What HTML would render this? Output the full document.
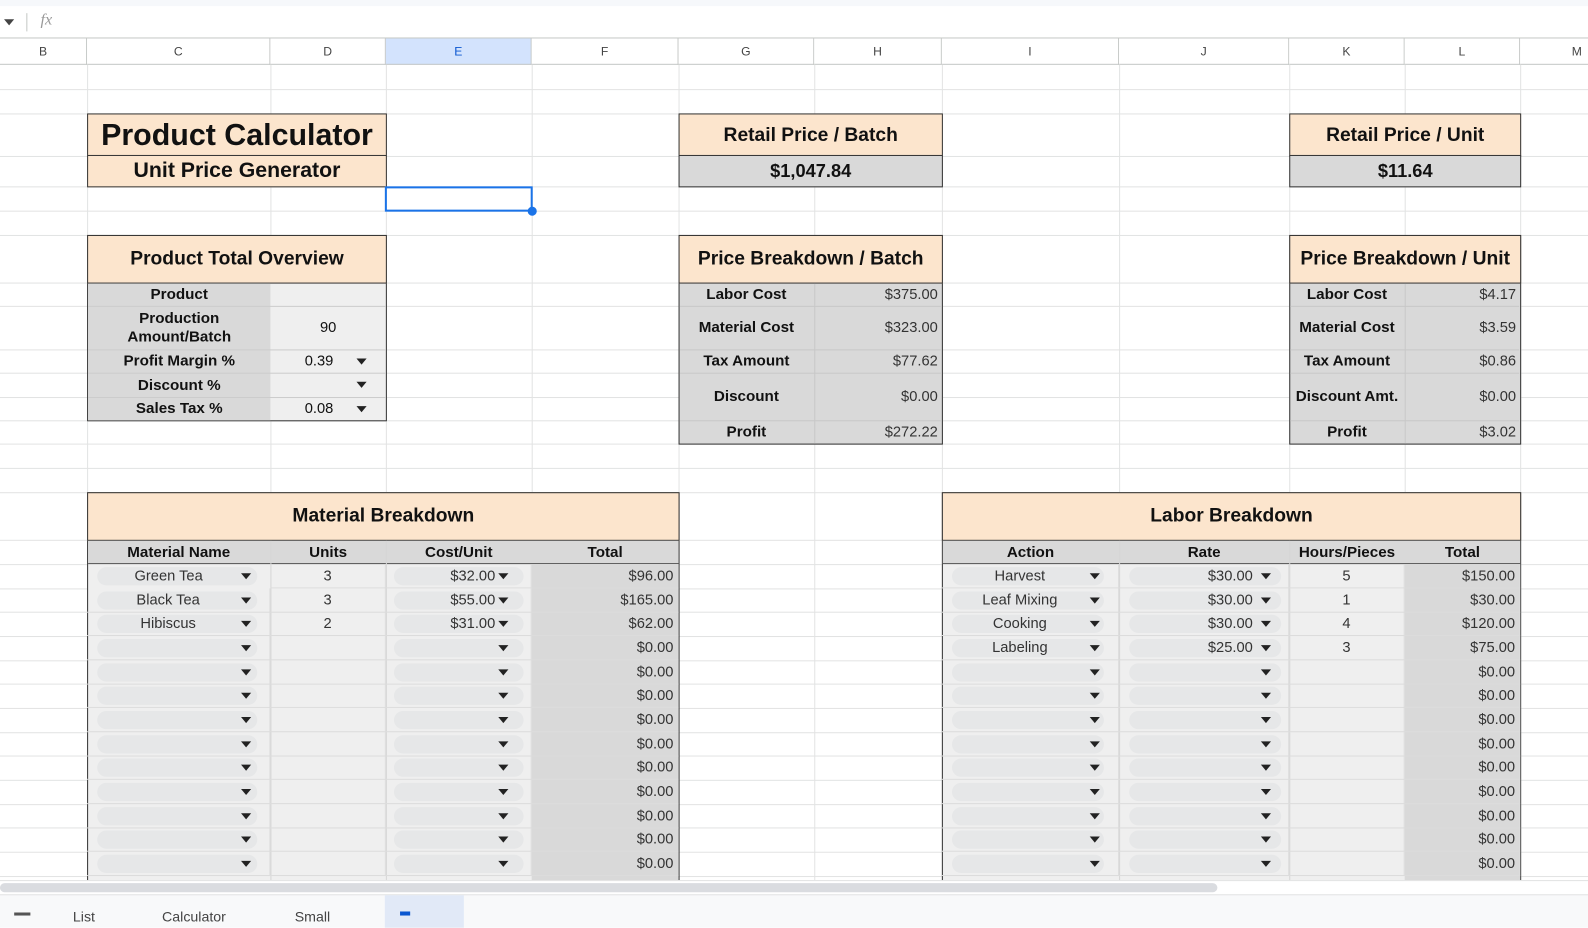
<!DOCTYPE html>
<html><head><meta charset="utf-8">
<style>
*{box-sizing:border-box;margin:0;padding:0}
body{width:1588px;height:916px;overflow:hidden;background:#fff;font-family:"Liberation Sans",Arial,sans-serif;position:relative;color:#111}
#w{position:absolute;left:0;top:0;width:1568px;height:905px;transform:scale(1.01276);transform-origin:0 0}
.a{position:absolute}
.hl{position:absolute;left:0;width:1588px;height:1px;background:#e2e3e3}
.vl{position:absolute;top:64px;height:806px;width:1px;background:#e2e3e3}
.ch{position:absolute;top:38px;height:26px;font-size:12px;color:#444;display:flex;align-items:center;justify-content:center;border-right:1px solid #c4c7c5;border-bottom:1px solid #c4c7c5;background:#fff}
.c{position:absolute;display:flex;align-items:center;justify-content:center;text-align:center}
.pe{background:#fce5cd;font-weight:bold;border:1.5px solid #333}
.b{font-weight:bold}
.g{background:#d9d9d9}
.lg{background:#efefef}
.tr{position:absolute;width:0;height:0;border-left:5px solid transparent;border-right:5px solid transparent;border-top:6px solid #222}
.row{position:absolute;height:24px;font-size:14.5px;color:#333}
.row>div{position:absolute;top:0;height:24px;display:flex;align-items:center;justify-content:center;border-right:1px solid #dcdcdc;border-bottom:1px solid #dcdcdc}
.pill{position:absolute;top:3px;height:18px;border-radius:9px;background:#e6e7e8}
.rt{justify-content:flex-end!important;padding-right:4px}
</style></head><body><div id="w">
<div class="a" style="left:0;top:0;width:1588px;height:6px;background:#f6f8fb"></div>
<div class="tr" style="left:4px;top:19px;border-top-color:#444"></div>
<div class="a" style="left:26px;top:13px;width:1px;height:18px;background:#c4c7c5"></div>
<div class="a" style="left:40px;top:11px;font-family:'Liberation Serif',serif;font-style:italic;color:#999;font-size:16px">fx</div>
<div class="a" style="left:0;top:37px;width:1588px;height:1px;background:#c4c7c5"></div>
<div class="ch" style="left:0;width:86px">B</div>
<div class="ch" style="left:86px;width:181px">C</div>
<div class="ch" style="left:267px;width:114px">D</div>
<div class="ch" style="left:381px;width:144px;background:#d3e3fd;color:#0b57d0">E</div>
<div class="ch" style="left:525px;width:145px">F</div>
<div class="ch" style="left:670px;width:134px">G</div>
<div class="ch" style="left:804px;width:126px">H</div>
<div class="ch" style="left:930px;width:175px">I</div>
<div class="ch" style="left:1105px;width:168px">J</div>
<div class="ch" style="left:1273px;width:114px">K</div>
<div class="ch" style="left:1387px;width:114px">L</div>
<div class="ch" style="left:1501px;width:110px;justify-content:flex-start;padding-left:51px">M</div>
<div class="vl" style="left:86px"></div><div class="vl" style="left:267px"></div><div class="vl" style="left:381px"></div><div class="vl" style="left:525px"></div><div class="vl" style="left:670px"></div><div class="vl" style="left:804px"></div><div class="vl" style="left:930px"></div><div class="vl" style="left:1105px"></div><div class="vl" style="left:1273px"></div><div class="vl" style="left:1387px"></div><div class="vl" style="left:1501px"></div>
<div class="hl" style="top:88px"></div><div class="hl" style="top:112px"></div><div class="hl" style="top:154px"></div><div class="hl" style="top:184px"></div><div class="hl" style="top:208px"></div><div class="hl" style="top:232px"></div><div class="hl" style="top:279px"></div><div class="hl" style="top:302px"></div><div class="hl" style="top:345px"></div><div class="hl" style="top:368px"></div><div class="hl" style="top:392px"></div><div class="hl" style="top:415px"></div><div class="hl" style="top:438px"></div><div class="hl" style="top:462px"></div><div class="hl" style="top:486px"></div><div class="hl" style="top:533px"></div><div class="hl" style="top:557px"></div><div class="hl" style="top:581px"></div><div class="hl" style="top:604px"></div><div class="hl" style="top:628px"></div><div class="hl" style="top:652px"></div><div class="hl" style="top:675px"></div><div class="hl" style="top:699px"></div><div class="hl" style="top:723px"></div><div class="hl" style="top:746px"></div><div class="hl" style="top:770px"></div><div class="hl" style="top:794px"></div><div class="hl" style="top:817px"></div><div class="hl" style="top:841px"></div><div class="hl" style="top:865px"></div>

<div class="c pe" style="left:86px;top:112px;width:296px;height:43px;font-size:30px">Product Calculator</div>
<div class="c pe" style="left:86px;top:153px;width:296px;height:32px;font-size:21px">Unit Price Generator</div>
<div class="a" style="left:380px;top:184px;width:146px;height:25px;border:2px solid #1a73e8"></div>
<div class="a" style="left:521px;top:204px;width:9px;height:9px;border-radius:50%;background:#1a73e8"></div>

<div class="c pe" style="left:670px;top:112px;width:261px;height:43px;font-size:19px">Retail Price / Batch</div>
<div class="c g b" style="left:670px;top:153px;width:261px;height:32px;font-size:18px;border:1.5px solid #333">$1,047.84</div>
<div class="c pe" style="left:1273px;top:112px;width:229px;height:43px;font-size:19px">Retail Price / Unit</div>
<div class="c g b" style="left:1273px;top:153px;width:229px;height:32px;font-size:18px;border:1.5px solid #333">$11.64</div>

<div class="a" style="left:86px;top:232px;width:296px;height:184px;border:1.5px solid #333;background:#efefef"></div>
<div class="c pe" style="left:86px;top:232px;width:296px;height:48px;font-size:19px">Product Total Overview</div>
<div class="a g" style="left:87px;top:280px;width:180px;height:135px"></div>
<div class="c b" style="left:87px;top:279px;width:180px;height:23px;font-size:15px">Product</div>
<div class="c b" style="left:87px;top:302px;width:180px;height:43px;font-size:15px;line-height:18px">Production<br>Amount/Batch</div>
<div class="c b" style="left:87px;top:345px;width:180px;height:23px;font-size:15px">Profit Margin %</div>
<div class="c b" style="left:87px;top:368px;width:180px;height:24px;font-size:15px">Discount %</div>
<div class="c b" style="left:87px;top:392px;width:180px;height:23px;font-size:15px">Sales Tax %</div>
<div class="c" style="left:267px;top:302px;width:114px;height:43px;font-size:14.5px">90</div>
<div class="c" style="left:267px;top:345px;width:96px;height:23px;font-size:14.5px">0.39</div>
<div class="c" style="left:267px;top:392px;width:96px;height:23px;font-size:14.5px">0.08</div>
<div class="tr" style="left:352px;top:354px"></div><div class="tr" style="left:352px;top:377px"></div><div class="tr" style="left:352px;top:401px"></div>
<div class="a" style="left:87px;top:302px;width:294px;height:1px;background:#ccc"></div>
<div class="a" style="left:87px;top:345px;width:294px;height:1px;background:#ccc"></div>
<div class="a" style="left:87px;top:368px;width:294px;height:1px;background:#ccc"></div>
<div class="a" style="left:87px;top:392px;width:294px;height:1px;background:#ccc"></div>

<div class="a g" style="left:670px;top:232px;width:261px;height:207px;border:1.5px solid #333"></div>
<div class="c pe" style="left:670px;top:232px;width:261px;height:48px;font-size:19px">Price Breakdown / Batch</div>
<div class="a" style="left:804px;top:280px;width:1px;height:158px;background:#c8c8c8"></div>
<div class="c b" style="left:670px;top:279px;width:134px;height:23px;font-size:15px">Labor Cost</div>
<div class="c b" style="left:670px;top:302px;width:134px;height:43px;font-size:15px">Material Cost</div>
<div class="c b" style="left:670px;top:345px;width:134px;height:23px;font-size:15px">Tax Amount</div>
<div class="c b" style="left:670px;top:368px;width:134px;height:47px;font-size:15px">Discount</div>
<div class="c b" style="left:670px;top:415px;width:134px;height:23px;font-size:15px">Profit</div>
<div class="c rt" style="left:804px;top:279px;width:126px;height:23px;font-size:14.5px;color:#333">$375.00</div>
<div class="c rt" style="left:804px;top:302px;width:126px;height:43px;font-size:14.5px;color:#333">$323.00</div>
<div class="c rt" style="left:804px;top:345px;width:126px;height:23px;font-size:14.5px;color:#333">$77.62</div>
<div class="c rt" style="left:804px;top:368px;width:126px;height:47px;font-size:14.5px;color:#333">$0.00</div>
<div class="c rt" style="left:804px;top:415px;width:126px;height:23px;font-size:14.5px;color:#333">$272.22</div>
<div class="a" style="left:671px;top:302px;width:258px;height:1px;background:#c8c8c8"></div><div class="a" style="left:671px;top:345px;width:258px;height:1px;background:#c8c8c8"></div><div class="a" style="left:671px;top:368px;width:258px;height:1px;background:#c8c8c8"></div><div class="a" style="left:671px;top:415px;width:258px;height:1px;background:#c8c8c8"></div>

<div class="a g" style="left:1273px;top:232px;width:229px;height:207px;border:1.5px solid #333"></div>
<div class="c pe" style="left:1273px;top:232px;width:229px;height:48px;font-size:19px">Price Breakdown / Unit</div>
<div class="a" style="left:1387px;top:280px;width:1px;height:158px;background:#c8c8c8"></div>
<div class="c b" style="left:1273px;top:279px;width:114px;height:23px;font-size:15px">Labor Cost</div>
<div class="c b" style="left:1273px;top:302px;width:114px;height:43px;font-size:15px">Material Cost</div>
<div class="c b" style="left:1273px;top:345px;width:114px;height:23px;font-size:15px">Tax Amount</div>
<div class="c b" style="left:1273px;top:368px;width:114px;height:47px;font-size:15px">Discount Amt.</div>
<div class="c b" style="left:1273px;top:415px;width:114px;height:23px;font-size:15px">Profit</div>
<div class="c rt" style="left:1387px;top:279px;width:114px;height:23px;font-size:14.5px;color:#333">$4.17</div>
<div class="c rt" style="left:1387px;top:302px;width:114px;height:43px;font-size:14.5px;color:#333">$3.59</div>
<div class="c rt" style="left:1387px;top:345px;width:114px;height:23px;font-size:14.5px;color:#333">$0.86</div>
<div class="c rt" style="left:1387px;top:368px;width:114px;height:47px;font-size:14.5px;color:#333">$0.00</div>
<div class="c rt" style="left:1387px;top:415px;width:114px;height:23px;font-size:14.5px;color:#333">$3.02</div>
<div class="a" style="left:1274px;top:302px;width:226px;height:1px;background:#c8c8c8"></div><div class="a" style="left:1274px;top:345px;width:226px;height:1px;background:#c8c8c8"></div><div class="a" style="left:1274px;top:368px;width:226px;height:1px;background:#c8c8c8"></div><div class="a" style="left:1274px;top:415px;width:226px;height:1px;background:#c8c8c8"></div>

<div class="a" style="left:86px;top:486px;width:585px;height:390px;border:1.5px solid #333;background:#efefef"></div>
<div class="c pe" style="left:86px;top:486px;width:585px;height:48px;font-size:19px">Material Breakdown</div>
<div class="a g" style="left:87px;top:534px;width:583px;height:23px;border-bottom:1.5px solid #555"></div>
<div class="c b" style="left:86px;top:533px;width:181px;height:24px;font-size:15px">Material Name</div>
<div class="c b" style="left:267px;top:533px;width:114px;height:24px;font-size:15px">Units</div>
<div class="c b" style="left:381px;top:533px;width:144px;height:24px;font-size:15px">Cost/Unit</div>
<div class="c b" style="left:525px;top:533px;width:145px;height:24px;font-size:15px">Total</div>
<div class="a" style="left:267px;top:534px;width:1px;height:336px;background:#d6d6d6"></div>
<div class="a" style="left:381px;top:534px;width:1px;height:336px;background:#d6d6d6"></div>
<div class="a g" style="left:525px;top:557px;width:145px;height:313px"></div>

<div class="a" style="left:930px;top:486px;width:572px;height:390px;border:1.5px solid #333;background:#efefef"></div>
<div class="c pe" style="left:930px;top:486px;width:572px;height:48px;font-size:19px">Labor Breakdown</div>
<div class="a g" style="left:931px;top:534px;width:570px;height:23px;border-bottom:1.5px solid #555"></div>
<div class="c b" style="left:930px;top:533px;width:175px;height:24px;font-size:15px">Action</div>
<div class="c b" style="left:1105px;top:533px;width:168px;height:24px;font-size:15px">Rate</div>
<div class="c b" style="left:1273px;top:533px;width:114px;height:24px;font-size:15px">Hours/Pieces</div>
<div class="c b" style="left:1387px;top:533px;width:114px;height:24px;font-size:15px">Total</div>
<div class="a" style="left:1105px;top:534px;width:1px;height:336px;background:#d6d6d6"></div>
<div class="a" style="left:1273px;top:534px;width:1px;height:336px;background:#d6d6d6"></div>
<div class="a g" style="left:1387px;top:557px;width:114px;height:313px"></div>

<div class="row" style="left:86px;top:557px;width:585px">
<div style="left:0;width:181px;border:0"><span class="pill" style="left:10px;width:158px"></span><span style="position:relative;margin-right:20px">Green Tea</span><i class="tr" style="left:152px;top:9px"></i></div>
<div style="left:181px;width:114px">3</div>
<div style="left:295px;width:144px;justify-content:flex-end;padding-right:35px"><span class="pill" style="left:8px;width:128px"></span><span style="position:relative">$32.00</span><i class="tr" style="left:111px;top:9px"></i></div>
<div class="rt" style="left:439px;width:145px">$96.00</div></div>
<div class="row" style="left:86px;top:581px;width:585px">
<div style="left:0;width:181px"><span class="pill" style="left:10px;width:158px"></span><span style="position:relative;margin-right:20px">Black Tea</span><i class="tr" style="left:152px;top:9px"></i></div>
<div style="left:181px;width:114px">3</div>
<div style="left:295px;width:144px;justify-content:flex-end;padding-right:35px"><span class="pill" style="left:8px;width:128px"></span><span style="position:relative">$55.00</span><i class="tr" style="left:111px;top:9px"></i></div>
<div class="rt" style="left:439px;width:145px">$165.00</div></div>
<div class="row" style="left:86px;top:604px;width:585px">
<div style="left:0;width:181px"><span class="pill" style="left:10px;width:158px"></span><span style="position:relative;margin-right:20px">Hibiscus</span><i class="tr" style="left:152px;top:9px"></i></div>
<div style="left:181px;width:114px">2</div>
<div style="left:295px;width:144px;justify-content:flex-end;padding-right:35px"><span class="pill" style="left:8px;width:128px"></span><span style="position:relative">$31.00</span><i class="tr" style="left:111px;top:9px"></i></div>
<div class="rt" style="left:439px;width:145px">$62.00</div></div>

<div class="row" style="left:86px;top:628px;width:585px"><div style="left:0;width:181px"><span class="pill" style="left:10px;width:158px"></span><i class="tr" style="left:152px;top:9px"></i></div><div style="left:181px;width:114px"></div><div style="left:295px;width:144px"><span class="pill" style="left:8px;width:128px"></span><i class="tr" style="left:111px;top:9px"></i></div><div class="rt" style="left:439px;width:145px">$0.00</div></div>
<div class="row" style="left:86px;top:652px;width:585px"><div style="left:0;width:181px"><span class="pill" style="left:10px;width:158px"></span><i class="tr" style="left:152px;top:9px"></i></div><div style="left:181px;width:114px"></div><div style="left:295px;width:144px"><span class="pill" style="left:8px;width:128px"></span><i class="tr" style="left:111px;top:9px"></i></div><div class="rt" style="left:439px;width:145px">$0.00</div></div>
<div class="row" style="left:86px;top:675px;width:585px"><div style="left:0;width:181px"><span class="pill" style="left:10px;width:158px"></span><i class="tr" style="left:152px;top:9px"></i></div><div style="left:181px;width:114px"></div><div style="left:295px;width:144px"><span class="pill" style="left:8px;width:128px"></span><i class="tr" style="left:111px;top:9px"></i></div><div class="rt" style="left:439px;width:145px">$0.00</div></div>
<div class="row" style="left:86px;top:699px;width:585px"><div style="left:0;width:181px"><span class="pill" style="left:10px;width:158px"></span><i class="tr" style="left:152px;top:9px"></i></div><div style="left:181px;width:114px"></div><div style="left:295px;width:144px"><span class="pill" style="left:8px;width:128px"></span><i class="tr" style="left:111px;top:9px"></i></div><div class="rt" style="left:439px;width:145px">$0.00</div></div>
<div class="row" style="left:86px;top:723px;width:585px"><div style="left:0;width:181px"><span class="pill" style="left:10px;width:158px"></span><i class="tr" style="left:152px;top:9px"></i></div><div style="left:181px;width:114px"></div><div style="left:295px;width:144px"><span class="pill" style="left:8px;width:128px"></span><i class="tr" style="left:111px;top:9px"></i></div><div class="rt" style="left:439px;width:145px">$0.00</div></div>
<div class="row" style="left:86px;top:746px;width:585px"><div style="left:0;width:181px"><span class="pill" style="left:10px;width:158px"></span><i class="tr" style="left:152px;top:9px"></i></div><div style="left:181px;width:114px"></div><div style="left:295px;width:144px"><span class="pill" style="left:8px;width:128px"></span><i class="tr" style="left:111px;top:9px"></i></div><div class="rt" style="left:439px;width:145px">$0.00</div></div>
<div class="row" style="left:86px;top:770px;width:585px"><div style="left:0;width:181px"><span class="pill" style="left:10px;width:158px"></span><i class="tr" style="left:152px;top:9px"></i></div><div style="left:181px;width:114px"></div><div style="left:295px;width:144px"><span class="pill" style="left:8px;width:128px"></span><i class="tr" style="left:111px;top:9px"></i></div><div class="rt" style="left:439px;width:145px">$0.00</div></div>
<div class="row" style="left:86px;top:794px;width:585px"><div style="left:0;width:181px"><span class="pill" style="left:10px;width:158px"></span><i class="tr" style="left:152px;top:9px"></i></div><div style="left:181px;width:114px"></div><div style="left:295px;width:144px"><span class="pill" style="left:8px;width:128px"></span><i class="tr" style="left:111px;top:9px"></i></div><div class="rt" style="left:439px;width:145px">$0.00</div></div>
<div class="row" style="left:86px;top:817px;width:585px"><div style="left:0;width:181px"><span class="pill" style="left:10px;width:158px"></span><i class="tr" style="left:152px;top:9px"></i></div><div style="left:181px;width:114px"></div><div style="left:295px;width:144px"><span class="pill" style="left:8px;width:128px"></span><i class="tr" style="left:111px;top:9px"></i></div><div class="rt" style="left:439px;width:145px">$0.00</div></div>
<div class="row" style="left:86px;top:841px;width:585px"><div style="left:0;width:181px"><span class="pill" style="left:10px;width:158px"></span><i class="tr" style="left:152px;top:9px"></i></div><div style="left:181px;width:114px"></div><div style="left:295px;width:144px"><span class="pill" style="left:8px;width:128px"></span><i class="tr" style="left:111px;top:9px"></i></div><div class="rt" style="left:439px;width:145px">$0.00</div></div>

<div class="row" style="left:930px;top:557px;width:572px"><div style="left:0;width:175px"><span class="pill" style="left:10px;width:150px"></span><span style="position:relative;margin-right:20px">Harvest</span><i class="tr" style="left:146px;top:9px"></i></div><div style="left:175px;width:168px;justify-content:flex-end;padding-right:35px"><span class="pill" style="left:10px;width:150px"></span><span style="position:relative">$30.00</span><i class="tr" style="left:140px;top:9px"></i></div><div style="left:343px;width:114px">5</div><div class="rt" style="left:457px;width:114px">$150.00</div></div>
<div class="row" style="left:930px;top:581px;width:572px"><div style="left:0;width:175px"><span class="pill" style="left:10px;width:150px"></span><span style="position:relative;margin-right:20px">Leaf Mixing</span><i class="tr" style="left:146px;top:9px"></i></div><div style="left:175px;width:168px;justify-content:flex-end;padding-right:35px"><span class="pill" style="left:10px;width:150px"></span><span style="position:relative">$30.00</span><i class="tr" style="left:140px;top:9px"></i></div><div style="left:343px;width:114px">1</div><div class="rt" style="left:457px;width:114px">$30.00</div></div>
<div class="row" style="left:930px;top:604px;width:572px"><div style="left:0;width:175px"><span class="pill" style="left:10px;width:150px"></span><span style="position:relative;margin-right:20px">Cooking</span><i class="tr" style="left:146px;top:9px"></i></div><div style="left:175px;width:168px;justify-content:flex-end;padding-right:35px"><span class="pill" style="left:10px;width:150px"></span><span style="position:relative">$30.00</span><i class="tr" style="left:140px;top:9px"></i></div><div style="left:343px;width:114px">4</div><div class="rt" style="left:457px;width:114px">$120.00</div></div>
<div class="row" style="left:930px;top:628px;width:572px"><div style="left:0;width:175px"><span class="pill" style="left:10px;width:150px"></span><span style="position:relative;margin-right:20px">Labeling</span><i class="tr" style="left:146px;top:9px"></i></div><div style="left:175px;width:168px;justify-content:flex-end;padding-right:35px"><span class="pill" style="left:10px;width:150px"></span><span style="position:relative">$25.00</span><i class="tr" style="left:140px;top:9px"></i></div><div style="left:343px;width:114px">3</div><div class="rt" style="left:457px;width:114px">$75.00</div></div>
<div class="row" style="left:930px;top:652px;width:572px"><div style="left:0;width:175px"><span class="pill" style="left:10px;width:150px"></span><i class="tr" style="left:146px;top:9px"></i></div><div style="left:175px;width:168px"><span class="pill" style="left:10px;width:150px"></span><i class="tr" style="left:140px;top:9px"></i></div><div style="left:343px;width:114px"></div><div class="rt" style="left:457px;width:114px">$0.00</div></div>
<div class="row" style="left:930px;top:675px;width:572px"><div style="left:0;width:175px"><span class="pill" style="left:10px;width:150px"></span><i class="tr" style="left:146px;top:9px"></i></div><div style="left:175px;width:168px"><span class="pill" style="left:10px;width:150px"></span><i class="tr" style="left:140px;top:9px"></i></div><div style="left:343px;width:114px"></div><div class="rt" style="left:457px;width:114px">$0.00</div></div>
<div class="row" style="left:930px;top:699px;width:572px"><div style="left:0;width:175px"><span class="pill" style="left:10px;width:150px"></span><i class="tr" style="left:146px;top:9px"></i></div><div style="left:175px;width:168px"><span class="pill" style="left:10px;width:150px"></span><i class="tr" style="left:140px;top:9px"></i></div><div style="left:343px;width:114px"></div><div class="rt" style="left:457px;width:114px">$0.00</div></div>
<div class="row" style="left:930px;top:723px;width:572px"><div style="left:0;width:175px"><span class="pill" style="left:10px;width:150px"></span><i class="tr" style="left:146px;top:9px"></i></div><div style="left:175px;width:168px"><span class="pill" style="left:10px;width:150px"></span><i class="tr" style="left:140px;top:9px"></i></div><div style="left:343px;width:114px"></div><div class="rt" style="left:457px;width:114px">$0.00</div></div>
<div class="row" style="left:930px;top:746px;width:572px"><div style="left:0;width:175px"><span class="pill" style="left:10px;width:150px"></span><i class="tr" style="left:146px;top:9px"></i></div><div style="left:175px;width:168px"><span class="pill" style="left:10px;width:150px"></span><i class="tr" style="left:140px;top:9px"></i></div><div style="left:343px;width:114px"></div><div class="rt" style="left:457px;width:114px">$0.00</div></div>
<div class="row" style="left:930px;top:770px;width:572px"><div style="left:0;width:175px"><span class="pill" style="left:10px;width:150px"></span><i class="tr" style="left:146px;top:9px"></i></div><div style="left:175px;width:168px"><span class="pill" style="left:10px;width:150px"></span><i class="tr" style="left:140px;top:9px"></i></div><div style="left:343px;width:114px"></div><div class="rt" style="left:457px;width:114px">$0.00</div></div>
<div class="row" style="left:930px;top:794px;width:572px"><div style="left:0;width:175px"><span class="pill" style="left:10px;width:150px"></span><i class="tr" style="left:146px;top:9px"></i></div><div style="left:175px;width:168px"><span class="pill" style="left:10px;width:150px"></span><i class="tr" style="left:140px;top:9px"></i></div><div style="left:343px;width:114px"></div><div class="rt" style="left:457px;width:114px">$0.00</div></div>
<div class="row" style="left:930px;top:817px;width:572px"><div style="left:0;width:175px"><span class="pill" style="left:10px;width:150px"></span><i class="tr" style="left:146px;top:9px"></i></div><div style="left:175px;width:168px"><span class="pill" style="left:10px;width:150px"></span><i class="tr" style="left:140px;top:9px"></i></div><div style="left:343px;width:114px"></div><div class="rt" style="left:457px;width:114px">$0.00</div></div>
<div class="row" style="left:930px;top:841px;width:572px"><div style="left:0;width:175px"><span class="pill" style="left:10px;width:150px"></span><i class="tr" style="left:146px;top:9px"></i></div><div style="left:175px;width:168px"><span class="pill" style="left:10px;width:150px"></span><i class="tr" style="left:140px;top:9px"></i></div><div style="left:343px;width:114px"></div><div class="rt" style="left:457px;width:114px">$0.00</div></div>

<div class="a" style="left:0;top:869px;width:1588px;height:14px;background:#fff;border-top:1px solid #e2e3e3"></div>
<div class="a" style="left:0;top:872px;width:1202px;height:9px;border-radius:5px;background:#dadce0"></div>
<div class="a" style="left:0;top:883px;width:1588px;height:33px;background:#f8f9fa;border-top:1px solid #e2e3e3"></div>
<div class="a" style="left:380px;top:884px;width:78px;height:32px;background:#e1e9f7"></div>
<div class="a" style="left:14px;top:901px;width:16px;height:3px;background:#555"></div>
<div class="a" style="left:72px;top:897px;font-size:14px;color:#444">List</div>
<div class="a" style="left:160px;top:897px;font-size:14px;color:#444">Calculator</div>
<div class="a" style="left:291px;top:897px;font-size:14px;color:#444">Small</div>
<div class="a" style="left:395px;top:900px;width:10px;height:4px;background:#0b57d0"></div>
</div></body></html>
